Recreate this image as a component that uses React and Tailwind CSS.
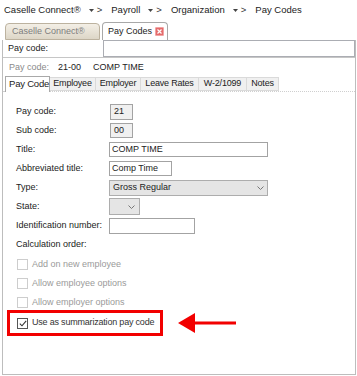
import React from 'react'

const font = "font-['Liberation_Sans',Arial,sans-serif]"

function Crumb() {
  return (
    <span className="ml-[8px] mr-[9px] flex items-center gap-[3px] text-[#333]">
      <svg width="5" height="3" viewBox="0 0 5 3">
        <path d="M0 0h5L2.5 3z" fill="#444" />
      </svg>
      <span>&gt;</span>
    </span>
  )
}

function Chevron() {
  return (
    <svg width="7" height="4" viewBox="0 0 7 4" className="shrink-0">
      <path d="M0.5 0.5L3.5 3.5L6.5 0.5" fill="none" stroke="#777" strokeWidth="1" />
    </svg>
  )
}

function Row({ label, children }) {
  return (
    <div className="flex h-[19px] items-center">
      <span className="w-[106px] shrink-0 pl-[13px]">{label}</span>
      {children}
    </div>
  )
}

function Check({ label }) {
  return (
    <div className="flex h-[19px] items-center pl-[14px] text-[#9a9a9a]">
      <span className="h-[11px] w-[11px] border border-[#cdcdcd] bg-white" />
      <span className="ml-[4px]">{label}</span>
    </div>
  )
}

const tabs = [
  { label: 'Pay Code', w: 'w-[45px]', active: true },
  { label: 'Employee', w: 'w-[46px]' },
  { label: 'Employer', w: 'w-[45px]' },
  { label: 'Leave Rates', w: 'w-[58px]' },
  { label: 'W-2/1099', w: 'w-[48px]' },
  { label: 'Notes', w: 'w-[32px]' },
]

export default function App() {
  return (
    <div className={`relative h-[376px] w-[357px] overflow-hidden whitespace-nowrap bg-white text-[9px] text-[#222] ${font}`}>
      {/* breadcrumb */}
      <div className="flex h-[21px] items-center pl-[4px] text-[9.5px]">
        <span>Caselle Connect®</span>
        <Crumb />
        <span>Payroll</span>
        <Crumb />
        <span>Organization</span>
        <Crumb />
        <span>Pay Codes</span>
      </div>

      {/* window tabs */}
      <div className="flex h-[19px] items-end pl-[5px]">
        <div className="flex h-[17px] w-[95px] items-center rounded-t-[4px] border border-[#bcb29f] bg-[linear-gradient(#f3efe6,#ddd6c7)] pl-[6px] text-[#7d7d7d]">
          Caselle Connect®
        </div>
        <div className="ml-[2px] flex h-[18px] w-[66px] items-center rounded-t-[4px] border border-b-0 border-[#a8a8a8] bg-white pl-[5px]">
          <span>Pay Codes</span>
          <span className="ml-auto mr-[3px] flex h-[9px] w-[9px] items-center justify-center rounded-[1px] border border-[#f2a3a3] bg-[#e46b6b]">
            <svg width="5" height="5" viewBox="0 0 5 5">
              <path d="M0.5 0.5L4.5 4.5M4.5 0.5L0.5 4.5" stroke="#fff" strokeWidth="1.2" />
            </svg>
          </span>
        </div>
      </div>

      {/* pane */}
      <div className="ml-[2px] flex h-[335px] w-[354px] flex-col border-x border-b border-[#bdbdbd]">
        <div className="flex h-[18px] items-center border-b border-[#c6c6c6]">
          <span className="w-[100px] shrink-0 pl-[5px]">Pay code:</span>
          <div className="h-[17px] flex-1 border border-[#abadb3] bg-white" />
        </div>

        <div className="flex h-[19px] items-center pl-[6px]">
          <span className="w-[49px] shrink-0 text-[#8a8a8a]">Pay code:</span>
          <span className="w-[35px] shrink-0">21-00</span>
          <span>COMP TIME</span>
        </div>

        {/* form tabs */}
        <div className="flex h-[15px] items-end border-b border-dotted border-[#cfcfcf] pl-[2px] tracking-[-0.2px]">
          {tabs.map(({ label, w, active }) =>
            active ? (
              <div
                key={label}
                className={`${w} -mb-px flex h-[16px] shrink-0 items-center border border-b-0 border-[#a9a9a9] bg-white pl-[3px] text-[9.5px]`}
              >
                {label}
              </div>
            ) : (
              <div
                key={label}
                className={`${w} flex h-[14px] shrink-0 items-center justify-center border-y border-r border-[#dadada] bg-[#f0f0f0]`}
              >
                {label}
              </div>
            )
          )}
        </div>

        {/* form */}
        <div className="flex flex-col pt-[10px]">
          <Row label="Pay code:">
            <div className="ml-[1px] flex h-[16px] w-[23px] items-center border border-[#a3a3a3] bg-[#f0f0f0] pl-[3px]">21</div>
          </Row>
          <Row label="Sub code:">
            <div className="ml-[1px] flex h-[15px] w-[23px] items-center border border-[#a3a3a3] bg-[#f0f0f0] pl-[3px]">00</div>
          </Row>
          <Row label="Title:">
            <div className="flex h-[15px] w-[159px] items-center border border-[#a3a3a3] bg-white pl-[2px]">COMP TIME</div>
          </Row>
          <Row label="Abbreviated title:">
            <div className="flex h-[15px] w-[63px] items-center border border-[#a3a3a3] bg-white pl-[2px]">Comp Time</div>
          </Row>
          <Row label="Type:">
            <div className="flex h-[16px] w-[159px] items-center border border-[#adadad] bg-[#e5e5e5] pl-[3px] pr-[3px]">
              <span className="flex-1">Gross Regular</span>
              <Chevron />
            </div>
          </Row>
          <Row label="State:">
            <div className="flex h-[17px] w-[31px] items-center justify-end border border-[#adadad] bg-[#e5e5e5] pr-[4px]">
              <Chevron />
            </div>
          </Row>
          <Row label="Identification number:">
            <div className="h-[16px] w-[86px] border border-[#a3a3a3] bg-white" />
          </Row>
          <div className="flex h-[20px] items-center pl-[13px]">Calculation order:</div>
          <Check label="Add on new employee" />
          <Check label="Allow employee options" />
          <Check label="Allow employer options" />

          <div className="-mt-[2px] flex items-center">
            <div className="ml-[4px] flex h-[26px] w-[156px] shrink-0 items-center border-[3px] border-[#f20000] pl-[7px] text-[#333]">
              <span className="flex h-[11px] w-[11px] shrink-0 items-center justify-center border border-[#555] bg-white">
                <svg width="8" height="7" viewBox="0 0 8 7">
                  <path d="M0.8 3.6L3 5.8L7.2 0.8" fill="none" stroke="#333" strokeWidth="1.1" />
                </svg>
              </span>
              <span className="ml-[4px] tracking-[-0.2px]">Use as summarization pay code</span>
            </div>
            <svg width="58" height="22" viewBox="0 0 58 22" className="ml-[15px] shrink-0">
              <path d="M0 11L17 1V21Z" fill="#f20000" />
              <rect x="16" y="9.5" width="42" height="3" fill="#f20000" />
            </svg>
          </div>
        </div>
      </div>
    </div>
  )
}
